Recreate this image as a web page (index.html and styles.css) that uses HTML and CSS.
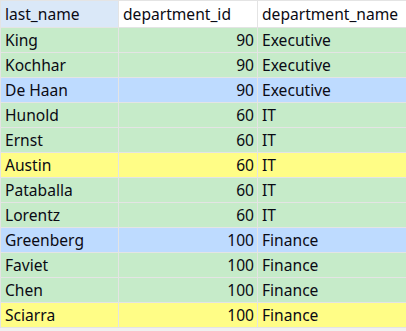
FILE: index.html
```html
<!DOCTYPE html>
<html lang="en">
<head>
    <meta charset="UTF-8">
    <title>employees</title>
    <link rel="stylesheet" href="styles.css">
</head>
<body>
    <div class="grid">
        <div class="head key">last_name</div>
        <div class="head">department_id</div>
        <div class="head">department_name</div>

        <div class="green">King</div><div class="green num">90</div><div class="green">Executive</div>
        <div class="green">Kochhar</div><div class="green num">90</div><div class="green">Executive</div>
        <div class="blue">De Haan</div><div class="blue num">90</div><div class="blue">Executive</div>
        <div class="green">Hunold</div><div class="green num">60</div><div class="green">IT</div>
        <div class="green">Ernst</div><div class="green num">60</div><div class="green">IT</div>
        <div class="yellow">Austin</div><div class="yellow num">60</div><div class="yellow">IT</div>
        <div class="green">Pataballa</div><div class="green num">60</div><div class="green">IT</div>
        <div class="green">Lorentz</div><div class="green num">60</div><div class="green">IT</div>
        <div class="blue">Greenberg</div><div class="blue num">100</div><div class="blue">Finance</div>
        <div class="green">Faviet</div><div class="green num">100</div><div class="green">Finance</div>
        <div class="green">Chen</div><div class="green num">100</div><div class="green">Finance</div>
        <div class="yellow">Sciarra</div><div class="yellow num">100</div><div class="yellow">Finance</div>
    </div>
</body>
</html>
```

FILE: styles.css
```css
body {
    margin: 0;
    background: #f0f0f0;
    font-family: "Noto Sans", sans-serif;
    font-size: 15.6px;
    color: #0a0a14;
}
.grid {
    display: grid;
    grid-template-columns: 117px 138px 1fr;
    grid-template-rows: 26px;
    grid-auto-rows: 24px;
    gap: 1px;
    padding: 1px 0 1px 1px;
    background: #e4e4e4;
}
.grid div {
    padding: 0 3px 0 4px;
    line-height: 24px;
    white-space: nowrap;
    overflow: hidden;
}
.head {
    background: #fff;
    line-height: 26px !important;
}
.head.key {
    background: #dae8f8;
}
.num {
    text-align: right;
}
.green {
    background: #c6ebc9;
}
.blue {
    background: #bedbff;
}
.yellow {
    background: #fffd86;
}
```
